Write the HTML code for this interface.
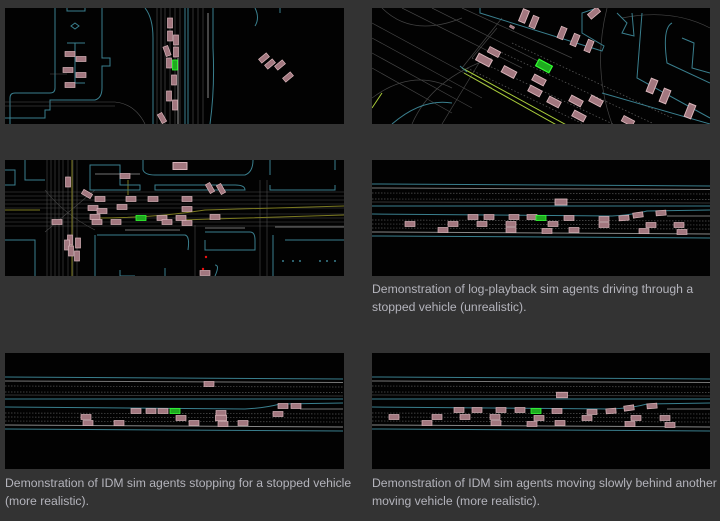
<!DOCTYPE html>
<html><head><meta charset="utf-8"><style>
html,body{margin:0;padding:0;background:#333333;width:720px;height:521px;overflow:hidden;font-family:"Liberation Sans",sans-serif}
.p{position:absolute;background:#020202;overflow:hidden}
.p svg{display:block}
.cap{position:absolute;color:#b4b4bc;font-size:12.2px;line-height:18px;white-space:nowrap}
</style></head><body>
<svg width="0" height="0" style="position:absolute">
<defs>
<g id="hw">
<line x1="0" y1="24" x2="338" y2="26" stroke="#3a7f8e" stroke-width="1"/>
<line x1="0" y1="28" x2="338" y2="29.5" stroke="#777" stroke-width="1"/>
<line x1="0" y1="33" x2="338" y2="34" stroke="#555" stroke-width=".7" stroke-dasharray="1.5 1.5"/>
<line x1="0" y1="39" x2="338" y2="39.5" stroke="#555" stroke-width=".7" stroke-dasharray="1.5 1.5"/>
<line x1="0" y1="42" x2="338" y2="43" stroke="#444" stroke-width=".7"/>
<line x1="0" y1="46" x2="338" y2="46" stroke="#3a7f8e" stroke-width="1"/>
<path d="M0 54 L240 56 Q260 55 275 51 L338 50" stroke="#3a7f8e" fill="none" stroke-width="1"/>
<line x1="295" y1="56" x2="338" y2="56" stroke="#777" stroke-width="1"/>
<line x1="0" y1="60" x2="338" y2="61" stroke="#555" stroke-width=".7" stroke-dasharray="1.5 1.5"/>
<line x1="0" y1="64" x2="338" y2="65" stroke="#555" stroke-width=".7" stroke-dasharray="1.5 1.5"/>
<line x1="0" y1="68" x2="338" y2="69" stroke="#555" stroke-width=".7" stroke-dasharray="1.5 1.5"/>
<line x1="0" y1="72" x2="338" y2="74" stroke="#888" stroke-width="1"/>
<line x1="0" y1="76" x2="338" y2="78" stroke="#3a7f8e" stroke-width="1"/>
</g>
<g id="c"><rect x="-5" y="-2.5" width="10" height="5" fill="#a2777f" stroke="#d9b5ba" stroke-width=".7"/></g>
<g id="g"><rect x="-5" y="-2.5" width="10" height="5" fill="#1faa1f" stroke="#3f3" stroke-width=".8"/></g>
</defs></svg>

<!-- Panel 1 -->
<div class="p" style="left:5px;top:8px;width:339px;height:116px">
<svg width="339" height="116" viewBox="0 0 339 116">
<g fill="none" stroke="#3a7f8e" stroke-width="1">
<path d="M50 0 V80 Q50 85 45 85 H10 Q5 85 5 90 V116"/>
<path d="M62 0 V3 H80 V0"/>
<path d="M62 35 H80 M70 35 V75 M62 75 H80"/>
<path d="M97 0 V50 H105 V58 H97 V80 Q97 90 90 92 H45 V102 H40 V110 H0"/>
<path d="M140 0 Q148 10 148 30 V116"/>
<path d="M180 0 V116 M183 0 V116"/>
<path d="M208 0 V40 Q210 80 205 116"/>
<path d="M250 0 Q255 10 250 18"/>
<path d="M275 0 V5"/>
<path d="M70 15 L74 18 L70 21 L66 18Z"/>
</g>
<g stroke="#555" stroke-width=".6" fill="none">
<path d="M152 0 V116 M156 0 V116 M160 0 V116 M165 0 V116 M170 0 V116 M175 0 V116 M188 0 V116 M193 0 V116 M198 0 V116"/>
<path d="M0 94 H110 Q130 96 140 116 M0 98 H110 M45 66 H62"/>
</g>
<line x1="203" y1="5" x2="203" y2="90" stroke="#888" stroke-width="1"/>
<line x1="173" y1="50" x2="173" y2="116" stroke="#999" stroke-width="1"/>
<use href="#c" transform="translate(65,46)"/><use href="#c" transform="translate(76,51)"/>
<use href="#c" transform="translate(63,62)"/><use href="#c" transform="translate(76,67)"/>
<use href="#c" transform="translate(65,77)"/>
<use href="#c" transform="translate(165,15) rotate(90)"/><use href="#c" transform="translate(165,28) rotate(90)"/>
<use href="#c" transform="translate(171,32) rotate(90)"/><use href="#c" transform="translate(162,43) rotate(70)"/>
<use href="#c" transform="translate(171,44) rotate(90)"/><use href="#c" transform="translate(164,55) rotate(90)"/>
<use href="#g" transform="translate(170,57) rotate(90)"/>
<use href="#c" transform="translate(169,72) rotate(90)"/><use href="#c" transform="translate(164,88) rotate(90)"/>
<use href="#c" transform="translate(170,97) rotate(90)"/><use href="#c" transform="translate(157,110) rotate(60)"/>
<use href="#c" transform="translate(259,50) rotate(-40)"/><use href="#c" transform="translate(265,56) rotate(-40)"/>
<use href="#c" transform="translate(275,57) rotate(-40)"/><use href="#c" transform="translate(283,69) rotate(-40)"/>
</svg></div>

<!-- Panel 2 -->
<div class="p" style="left:372px;top:8px;width:338px;height:116px">
<svg width="338" height="116" viewBox="0 0 338 116">
<g stroke="#444" stroke-width=".7" fill="none">
<path d="M0 15 L120 80 M0 30 L110 90 M0 45 L100 100 M0 60 L80 105 M30 0 L150 60 M60 0 L170 55 M90 0 L200 50"/>
<path d="M10 0 Q40 30 90 10 M40 116 Q60 70 120 50 M0 90 Q40 60 80 80"/>
<path d="M100 50 L125 20 M130 10 L90 60 M70 116 L110 50"/>
<path d="M235 0 Q220 60 240 116 M250 10 Q300 0 338 20"/>
</g>
<g stroke="#555" stroke-width=".8" fill="none" stroke-dasharray="1.5 2">
<path d="M100 50 L260 125 M95 60 L240 130 M120 40 L280 115 M140 35 L300 110"/>
</g>
<g stroke="#a9cc3a" stroke-width="1" fill="none">
<path d="M90 60 L200 120 M92 65 L190 120"/><path d="M0 100 L10 85"/>
</g>
<g stroke="#3a7f8e" stroke-width="1" fill="none">
<path d="M108 0 V5 L230 43 L232 38 L210 25 V5 L225 0"/>
<path d="M88 58 L95 64"/>
<path d="M20 116 Q50 90 80 95"/>
<path d="M245 5 L255 15 L250 25 L262 28 L260 5"/>
<path d="M270 5 L265 70 L338 110"/>
<path d="M300 15 Q290 20 295 55 L338 75 M310 30 L322 35 L320 60 L338 65"/>
<path d="M230 85 L338 116"/>
</g>
<use href="#c" transform="translate(152,8) rotate(-68) scale(1.3)"/><use href="#c" transform="translate(162,14) rotate(-68) scale(1.2)"/>
<use href="#c" transform="translate(190,25) rotate(-68) scale(1.2)"/><use href="#c" transform="translate(203,32) rotate(-68) scale(1.2)"/>
<use href="#c" transform="translate(217,38) rotate(-68) scale(1.2)"/><use href="#c" transform="translate(222,5) rotate(-40) scale(1.2)"/>
<use href="#c" transform="translate(140,19) rotate(30) scale(.5)"/>
<use href="#c" transform="translate(122,44) rotate(28) scale(1.2)"/><use href="#c" transform="translate(112,52) rotate(28) scale(1.5)"/>
<use href="#c" transform="translate(137,64) rotate(28) scale(1.4)"/><use href="#g" transform="translate(172,58) rotate(28) scale(1.5)"/>
<use href="#c" transform="translate(167,72) rotate(28) scale(1.3)"/><use href="#c" transform="translate(163,83) rotate(28) scale(1.3)"/>
<use href="#c" transform="translate(182,94) rotate(28) scale(1.3)"/><use href="#c" transform="translate(204,93) rotate(28) scale(1.3)"/>
<use href="#c" transform="translate(224,93) rotate(28) scale(1.3)"/><use href="#c" transform="translate(207,108) rotate(28) scale(1.3)"/>
<use href="#c" transform="translate(280,78) rotate(-68) scale(1.4)"/><use href="#c" transform="translate(293,88) rotate(-68) scale(1.4)"/>
<use href="#c" transform="translate(318,103) rotate(-68) scale(1.4)"/><use href="#c" transform="translate(256,113) rotate(28) scale(1.2)"/>
</svg></div>

<!-- Panel 3 -->
<div class="p" style="left:5px;top:160px;width:339px;height:116px">
<svg width="339" height="116" viewBox="0 0 339 116">
<g stroke="#4a4a4a" stroke-width=".6" fill="none">
<path d="M42 0 V116 M46 0 V116 M50 0 V116 M54 0 V116 M58 0 V116 M63 0 V116 M68 0 V116 M72 0 V116"/>
<path d="M0 32 H339 M0 36 H339 M0 40 H339 M0 44 H339 M0 48 H339 M0 54 H339 M0 58 H339 M0 62 H339 M0 66 H339"/>
<path d="M40 30 Q60 55 90 70 M90 30 Q60 55 40 72 M190 65 V116 M255 20 V116 M262 20 V116"/>
</g>
<g stroke="#7c7a20" stroke-width="1" fill="none">
<path d="M0 50 H35 M90 58 Q150 58 200 50 L339 46 M175 60 L339 55 M67 0 V116 M123 20 V35"/>
</g>
<g stroke="#999" stroke-width=".8"><path d="M120 70 H175 M200 68 H240 M270 67 H339 M90 14 H135"/></g>
<g stroke="#3a7f8e" stroke-width="1" fill="none">
<path d="M0 10 H10 V25 H0 M20 0 V20 H40"/>
<path d="M85 5 H115 V25 H135 V30 H85 Z"/>
<path d="M138 0 V10 Q140 15 150 15 H240 Q248 12 248 0"/>
<path d="M150 25 H230 Q240 25 240 30 H150Z"/>
<path d="M265 0 V15 M265 25 V30 H330 V25 M330 0 V10"/>
<path d="M0 80 H30 V116 M90 75 V116 M92 75 H180 Q185 76 183 90 M200 80 V90 H250 V80 Q250 72 245 72 H200"/>
<path d="M268 75 V116 M280 80 H339 M115 110 V116 H130 M160 108 V116 M210 105 Q215 105 210 116"/>
</g>
<g fill="#3a7f8e"><circle cx="278" cy="101" r="1"/><circle cx="288" cy="101" r="1"/><circle cx="295" cy="101" r="1"/><circle cx="315" cy="101" r="1"/><circle cx="322" cy="101" r="1"/><circle cx="330" cy="101" r="1"/></g>
<g fill="#e11"><circle cx="201" cy="97" r="1.2"/><circle cx="198" cy="109" r="1.2"/></g>
<use href="#c" transform="translate(175,6) scale(1.4)"/><use href="#c" transform="translate(120,16)"/>
<use href="#c" transform="translate(63,22) rotate(90)"/><use href="#c" transform="translate(82,34) rotate(30)"/>
<use href="#c" transform="translate(95,39)"/><use href="#c" transform="translate(126,39)"/><use href="#c" transform="translate(148,39)"/><use href="#c" transform="translate(182,39)"/>
<use href="#c" transform="translate(88,48)"/><use href="#c" transform="translate(97,51)"/><use href="#c" transform="translate(117,47)"/><use href="#c" transform="translate(182,49)"/>
<use href="#c" transform="translate(205,28) rotate(60)"/><use href="#c" transform="translate(216,29) rotate(60)"/>
<use href="#c" transform="translate(52,62)"/><use href="#c" transform="translate(90,57)"/><use href="#c" transform="translate(92,62)"/><use href="#c" transform="translate(111,62)"/>
<use href="#g" transform="translate(136,58)"/><use href="#c" transform="translate(157,58)"/><use href="#c" transform="translate(162,62)"/><use href="#c" transform="translate(176,58)"/><use href="#c" transform="translate(182,63)"/><use href="#c" transform="translate(210,57)"/>
<use href="#c" transform="translate(65,80) rotate(90)"/><use href="#c" transform="translate(73,83) rotate(90)"/><use href="#c" transform="translate(62,85) rotate(90)"/><use href="#c" transform="translate(66,91) rotate(90)"/><use href="#c" transform="translate(72,96) rotate(90)"/><use href="#c" transform="translate(200,113)"/>
</svg></div>

<!-- Panel 4 -->
<div class="p" style="left:372px;top:160px;width:338px;height:116px">
<svg width="338" height="116" viewBox="0 0 338 116">
<use href="#hw"/>
<use href="#c" transform="translate(189,42) scale(1.2)"/>
<use href="#c" transform="translate(101,57)"/><use href="#c" transform="translate(117,57)"/><use href="#c" transform="translate(142,57)"/><use href="#c" transform="translate(160,57)"/>
<use href="#g" transform="translate(169,58)"/><use href="#c" transform="translate(197,58)"/><use href="#c" transform="translate(232,59)"/><use href="#c" transform="translate(252,58) rotate(-5)"/>
<use href="#c" transform="translate(266,55) rotate(-8)"/><use href="#c" transform="translate(289,53) rotate(-5)"/>
<use href="#c" transform="translate(38,64)"/><use href="#c" transform="translate(81,64)"/><use href="#c" transform="translate(110,64)"/><use href="#c" transform="translate(139,64)"/><use href="#c" transform="translate(181,64)"/>
<use href="#c" transform="translate(232,65)"/><use href="#c" transform="translate(279,65)"/><use href="#c" transform="translate(307,65)"/>
<use href="#c" transform="translate(71,70)"/><use href="#c" transform="translate(139,70)"/><use href="#c" transform="translate(175,71)"/><use href="#c" transform="translate(202,70)"/><use href="#c" transform="translate(272,71)"/><use href="#c" transform="translate(310,72)"/>
</svg></div>

<div class="cap" style="left:372px;top:280px">Demonstration of log-playback sim agents driving through a<br>stopped vehicle (unrealistic).</div>

<!-- Panel 5 -->
<div class="p" style="left:5px;top:353px;width:339px;height:116px">
<svg width="339" height="116" viewBox="0 0 339 116">
<use href="#hw"/>
<use href="#c" transform="translate(204,31)"/>
<use href="#c" transform="translate(131,58)"/><use href="#c" transform="translate(146,58)"/><use href="#c" transform="translate(158,58)"/><use href="#g" transform="translate(170,58)"/>
<use href="#c" transform="translate(176,65)"/><use href="#c" transform="translate(216,60)"/><use href="#c" transform="translate(216,65) scale(1.1)"/>
<use href="#c" transform="translate(81,64)"/><use href="#c" transform="translate(83,70)"/><use href="#c" transform="translate(114,70)"/><use href="#c" transform="translate(189,70)"/>
<use href="#c" transform="translate(218,71)"/><use href="#c" transform="translate(238,70)"/><use href="#c" transform="translate(273,61)"/><use href="#c" transform="translate(278,53)"/><use href="#c" transform="translate(291,53)"/>
</svg></div>

<!-- Panel 6 -->
<div class="p" style="left:372px;top:353px;width:338px;height:116px">
<svg width="338" height="116" viewBox="0 0 338 116">
<use href="#hw"/>
<use href="#c" transform="translate(190,42) scale(1.1)"/>
<use href="#c" transform="translate(87,57)"/><use href="#c" transform="translate(105,57)"/><use href="#c" transform="translate(129,57)"/><use href="#c" transform="translate(148,57)"/>
<use href="#g" transform="translate(164,58)"/><use href="#c" transform="translate(185,58)"/><use href="#c" transform="translate(220,59)"/><use href="#c" transform="translate(239,58) rotate(-5)"/>
<use href="#c" transform="translate(257,55) rotate(-8)"/><use href="#c" transform="translate(280,53) rotate(-5)"/>
<use href="#c" transform="translate(22,64)"/><use href="#c" transform="translate(65,64)"/><use href="#c" transform="translate(93,64)"/><use href="#c" transform="translate(123,64)"/><use href="#c" transform="translate(167,65)"/>
<use href="#c" transform="translate(215,65)"/><use href="#c" transform="translate(264,65)"/><use href="#c" transform="translate(293,65)"/>
<use href="#c" transform="translate(55,70)"/><use href="#c" transform="translate(124,70)"/><use href="#c" transform="translate(160,71)"/><use href="#c" transform="translate(188,70)"/><use href="#c" transform="translate(258,71)"/><use href="#c" transform="translate(298,72)"/>
</svg></div>

<div class="cap" style="left:5px;top:474px">Demonstration of IDM sim agents stopping for a stopped vehicle<br>(more realistic).</div>
<div class="cap" style="left:372px;top:474px">Demonstration of IDM sim agents moving slowly behind another<br>moving vehicle (more realistic).</div>
</body></html>
